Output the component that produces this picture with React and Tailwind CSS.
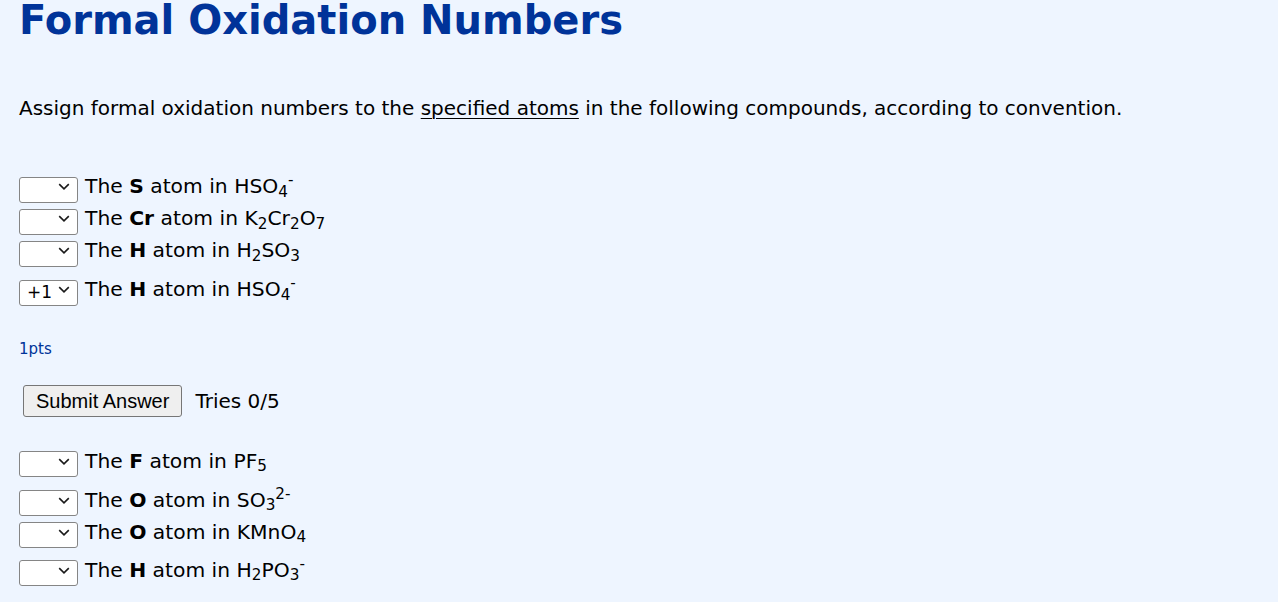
const TOP = [
  { atom: 'S', formula: <>HSO<sub>4</sub><sup>-</sup></>, mt: 'mt-0' },
  { atom: 'Cr', formula: <>K<sub>2</sub>Cr<sub>2</sub>O<sub>7</sub></>, mt: 'mt-[6px]' },
  { atom: 'H', formula: <>H<sub>2</sub>SO<sub>3</sub></>, mt: 'mt-[6px]' },
  { atom: 'H', formula: <>HSO<sub>4</sub><sup>-</sup></>, mt: 'mt-[13px]', value: '+1' },
];

const BOTTOM = [
  { atom: 'F', formula: <>PF<sub>5</sub></>, mt: 'mt-0' },
  { atom: 'O', formula: <>SO<sub>3</sub><sup>2-</sup></>, mt: 'mt-[13px]' },
  { atom: 'O', formula: <>KMnO<sub>4</sub></>, mt: 'mt-[6px]' },
  { atom: 'H', formula: <>H<sub>2</sub>PO<sub>3</sub><sup>-</sup></>, mt: 'mt-[12px]' },
];

const OPTIONS = ['', '-3', '-2', '-1', '0', '+1', '+2', '+3', '+4', '+5', '+6', '+7'];

function Pick({ value = '' }) {
  return (
    <div className="relative h-[26px] w-[59px] shrink-0">
      <select
        defaultValue={value}
        className="h-full w-full appearance-none rounded-[3px] border border-[#858585] bg-white pl-[7px] text-[17px] leading-none text-black outline-none"
      >
        {OPTIONS.map((o) => (
          <option key={o} value={o}>
            {o}
          </option>
        ))}
      </select>
      <svg
        className="pointer-events-none absolute right-[8px] top-[10px]"
        width="12"
        height="7"
        viewBox="0 0 12 7"
        fill="none"
      >
        <path d="M1.2 1.2l4.8 4.6 4.8-4.6" stroke="#1a1a1a" strokeWidth="1.6" />
      </svg>
    </div>
  );
}

function Row({ atom, formula, mt, value }) {
  return (
    <div className={`flex h-[26px] items-center ${mt}`}>
      <Pick value={value} />
      <span className="ml-[7px] whitespace-nowrap text-[20.3px] leading-[26px]">
        The <b className="font-bold">{atom}</b> atom in {formula}
      </span>
    </div>
  );
}

export default function App() {
  return (
    <div className="min-h-[602px] overflow-hidden bg-[#eef5ff] pl-[19px] font-['DejaVu_Sans',Verdana,sans-serif] text-[20px] text-black">
      <h1 className="text-[40px] font-bold leading-[40px] text-[#003399]">Formal Oxidation Numbers</h1>

      <p className="mt-[53px]">
        Assign formal oxidation numbers to the{' '}
        <span className="underline decoration-1 underline-offset-[3px]">specified atoms</span> in the
        following compounds, according to convention.
      </p>

      <div className="mt-[50px]">
        {TOP.map((r, i) => (
          <Row key={i} {...r} />
        ))}
      </div>

      <p className="mt-[36px] text-[15px] text-[#003399]">1pts</p>

      <div className="mt-[24px] flex items-center">
        <button className="ml-[4px] h-[32px] rounded-[3px] border border-[#767676] bg-[#efefef] px-[12px] font-['Liberation_Sans',Arial,sans-serif] text-[20px] leading-none text-black">
          Submit Answer
        </button>
        <span className="ml-[13px]">Tries 0/5</span>
      </div>

      <div className="mt-[31px]">
        {BOTTOM.map((r, i) => (
          <Row key={i} {...r} />
        ))}
      </div>
    </div>
  );
}
